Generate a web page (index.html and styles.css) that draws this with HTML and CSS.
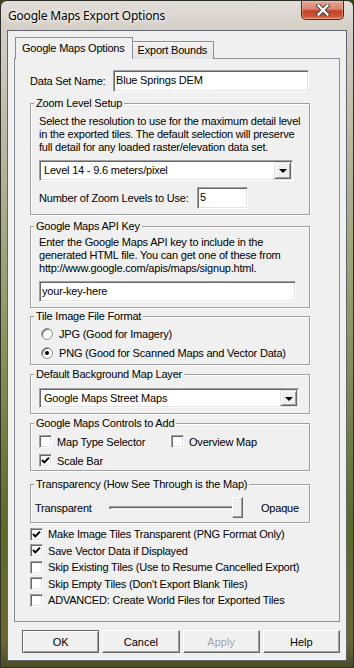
FILE: index.html
```html
<!DOCTYPE html>
<html>
<head>
  <title>Google Maps Export Options</title>
  <link rel="stylesheet" href="styles.css">
</head>
<body>
  <div class="window">
    <div class="titlebar">
      <span class="title">Google Maps Export Options</span>
      <button type="button" class="close" aria-label="Close">
        <svg width="14" height="12" viewBox="0 0 14 12">
          <path d="M2.5 1.5 L11.5 10.5 M11.5 1.5 L2.5 10.5" stroke="#3a3a3a" stroke-width="4.2" stroke-linecap="square"/>
          <path d="M2.5 1.5 L11.5 10.5 M11.5 1.5 L2.5 10.5" stroke="#fff" stroke-width="2.4" stroke-linecap="square"/>
        </svg>
      </button>
    </div>

    <div class="client">
      <div class="tabs">
        <div class="tab active">Google Maps Options</div>
        <div class="tab">Export Bounds</div>
      </div>

      <div class="page">
        <div class="name-row">
          <label for="dataSetName">Data Set Name:</label>
          <input type="text" id="dataSetName" class="field name-field" value="Blue Springs DEM">
        </div>

        <fieldset class="group zoom-group">
          <legend>Zoom Level Setup</legend>
          <p class="note">Select the resolution to use for the maximum detail level<br>in the exported tiles. The default selection will preserve<br>full detail for any loaded raster/elevation data set.</p>
          <div class="combo zoom-combo"><span class="combo-text">Level 14 - 9.6 meters/pixel</span><span class="drop"><i></i></span></div>
          <div class="levels-row">
            <label for="levels">Number of Zoom Levels to Use:</label>
            <input type="text" id="levels" class="field levels-field" value="5">
          </div>
        </fieldset>

        <fieldset class="group api-group">
          <legend>Google Maps API Key</legend>
          <p class="note">Enter the Google Maps API key to include in the<br>generated HTML file. You can get one of these from<br>http://www.google.com/apis/maps/signup.html.</p>
          <input type="text" class="field api-field" value="your-key-here">
        </fieldset>

        <fieldset class="group format-group">
          <legend>Tile Image File Format</legend>
          <label class="radio-row"><span class="radio"></span>JPG (Good for Imagery)</label>
          <label class="radio-row"><span class="radio on"></span>PNG (Good for Scanned Maps and Vector Data)</label>
        </fieldset>

        <fieldset class="group layer-group">
          <legend>Default Background Map Layer</legend>
          <div class="combo layer-combo"><span class="combo-text">Google Maps Street Maps</span><span class="drop"><i></i></span></div>
        </fieldset>

        <fieldset class="group controls-group">
          <legend>Google Maps Controls to Add</legend>
          <div class="controls-grid">
            <label class="check"><span class="box"></span>Map Type Selector</label>
            <label class="check"><span class="box"></span>Overview Map</label>
            <label class="check"><span class="box"><svg width="11" height="11" viewBox="0 0 11 11"><polyline points="2,5 4.3,7.4 9,2.6" fill="none" stroke="#000" stroke-width="2"/></svg></span>Scale Bar</label>
          </div>
        </fieldset>

        <fieldset class="group slider-group">
          <legend>Transparency (How See Through is the Map)</legend>
          <div class="slider-row">
            <span class="slider-label">Transparent</span>
            <div class="slider">
              <div class="track"></div>
              <div class="thumb"></div>
            </div>
            <span class="slider-end">Opaque</span>
          </div>
        </fieldset>

        <div class="options">
          <label class="check"><span class="box"><svg width="11" height="11" viewBox="0 0 11 11"><polyline points="2,5 4.3,7.4 9,2.6" fill="none" stroke="#000" stroke-width="2"/></svg></span>Make Image Tiles Transparent (PNG Format Only)</label>
          <label class="check"><span class="box"><svg width="11" height="11" viewBox="0 0 11 11"><polyline points="2,5 4.3,7.4 9,2.6" fill="none" stroke="#000" stroke-width="2"/></svg></span>Save Vector Data if Displayed</label>
          <label class="check"><span class="box"></span>Skip Existing Tiles (Use to Resume Cancelled Export)</label>
          <label class="check"><span class="box"></span>Skip Empty Tiles (Don't Export Blank Tiles)</label>
          <label class="check"><span class="box"></span>ADVANCED: Create World Files for Exported Tiles</label>
        </div>
      </div>

      <div class="buttons">
        <button type="button" class="btn default">OK</button>
        <button type="button" class="btn">Cancel</button>
        <button type="button" class="btn" disabled>Apply</button>
        <button type="button" class="btn">Help</button>
      </div>
    </div>
  </div>
</body>
</html>
```

FILE: styles.css
```css
* { box-sizing: border-box; }
body { margin: 0; background: #3c4420; font: 11px "Liberation Sans", Arial, sans-serif; letter-spacing: -0.2px; color: #000; }

/* window frame */
.window { width: 354px; height: 668px; display: flex; flex-direction: column; padding: 0 6px 6px; border: 1px solid #2f3128; border-radius: 7px 7px 3px 3px;
  background: linear-gradient(180deg, #e2ded8 0, #d4cec6 28px, #c0bba8 120px, #8e9660 330px, #5d6a2c 520px, #6c6630 640px, #4a4a24 668px); }
.titlebar { height: 29px; display: flex; align-items: flex-start; }
.title { font: 12px "Noto Sans", sans-serif; letter-spacing: -0.2px; margin: 6px 0 0 1px; text-shadow: 0 0 6px #fff, 0 0 3px #fff; }
.close { margin-left: auto; margin-right: 3px; width: 43px; height: 19px; padding: 0; display: flex; align-items: center; justify-content: center;
  border: 1px solid #5a2114; border-top: none; border-radius: 0 0 5px 5px;
  background: linear-gradient(180deg, #e9a898 0, #d9836b 45%, #c2432a 55%, #cc5637 85%, #e0866a 100%); box-shadow: inset 0 0 0 1px rgba(255,220,200,.35); }

.client { flex: 1; background: #f0f0f0; border: 1px solid #60666e; padding: 6px 6px 0; }

/* tabs */
.tabs { display: flex; align-items: flex-end; height: 22px; margin-left: 1px; position: relative; z-index: 1; margin-bottom: -1px; }
.tab { height: 18px; padding: 0 6px 0 5px; line-height: 17px; border: 1px solid #8b8e96; border-bottom: none; margin-left: -1px;
  background: linear-gradient(180deg, #f3f3f3, #e3e3e3); }
.tab.active { height: 22px; padding: 0 7px 0 6px; line-height: 20px; background: #f0f0f0; margin-left: 0; position: relative; z-index: 2; }
.page { height: 564px; border: 1px solid #8b8e96; padding: 11px 0 0 15px; background: #f0f0f0; }

/* 3d fields */
.field { font: 11px "Liberation Sans", Arial, sans-serif; letter-spacing: -0.2px; color: #000; background: #fff; padding: 0 2px; margin: 0; outline: none;
  border: 1px solid; border-color: #a0a0a0 #fff #fff #a0a0a0; box-shadow: inset 1px 1px #696969, inset -1px -1px #e3e3e3; }
.name-row { display: flex; align-items: center; height: 22px; }
.name-row label { width: 83px; }
.name-field { width: 196px; height: 22px; padding-bottom: 3px; }

.group { width: 280px; margin: 0; padding: 0 8px; border: 1px solid #a0a0a0; box-shadow: inset 1px 1px #fff, 1px 1px #fff; min-inline-size: 0; }
.group legend { padding: 0 2px; margin-left: -5px; line-height: 13px; background: #f0f0f0; }
.note { margin: 0; line-height: 13px; white-space: nowrap; }

.combo { display: flex; height: 21px; background: #fff; border: 1px solid; border-color: #a0a0a0 #fff #fff #a0a0a0; box-shadow: inset 1px 1px #696969, inset -1px -1px #e3e3e3; padding: 1px; }
.combo-text { flex: 1; padding: 2px 0 0 3px; }
.drop { width: 17px; display: flex; align-items: center; justify-content: center; background: #f0f0f0;
  border: 1px solid; border-color: #e3e3e3 #696969 #696969 #e3e3e3; box-shadow: inset 1px 1px #fff, inset -1px -1px #a0a0a0; }
.drop i { width: 0; height: 0; border-left: 4px solid transparent; border-right: 4px solid transparent; border-top: 4px solid #000; margin-top: 1px; }

.zoom-group { margin-top: 5px; padding-top: 5px; padding-bottom: 5px; }
.zoom-combo { width: 254px; margin-top: 6px; }
.levels-row { display: flex; align-items: center; margin-top: 6px; height: 22px; }
.levels-row label { width: 158px; }
.levels-field { width: 51px; height: 22px; padding-bottom: 3px; }

.api-group { margin-top: 5px; padding-top: 3px; padding-bottom: 5px; }
.api-field { display: block; width: 257px; height: 21px; margin-top: 6px; padding-bottom: 2px; }

.format-group { margin-top: 2px; padding-top: 1px; padding-bottom: 2px; }
.radio-row { display: flex; align-items: center; height: 19px; padding-left: 2px; }
.radio { width: 12px; height: 12px; border-radius: 50%; margin-right: 6px; background: #fff; border: 1px solid #8d8d8d; box-shadow: inset 1px 1px #6b6b6b, 0 0 0 1px #f8f8f8; display: flex; align-items: center; justify-content: center; }
.radio.on::after { content: ""; width: 4px; height: 4px; border-radius: 50%; background: #000; }

.layer-group { margin-top: 3px; padding-top: 7px; padding-bottom: 5px; }
.layer-combo { width: 260px; height: 20px; }

.controls-group { margin-top: 3px; padding-top: 3px; padding-bottom: 1px; }
.controls-grid { display: grid; grid-template-columns: 132px 1fr; row-gap: 2px; }

.check { display: flex; align-items: center; height: 17px; }
.box { width: 13px; height: 13px; flex: none; margin-right: 5px; background: #fff; border: 1px solid; border-color: #a0a0a0 #fff #fff #a0a0a0; box-shadow: inset 1px 1px #696969, inset -1px -1px #e3e3e3; display: flex; align-items: center; justify-content: center; }

.slider-group { margin-top: 7px; padding: 6px 8px 4px 4px; }
.slider-group legend { margin-left: -1px; }
.slider-row { display: flex; align-items: center; height: 21px; }
.slider-label { width: 74px; }
.slider { position: relative; width: 134px; height: 21px; display: flex; align-items: center; }
.track { width: 100%; height: 4px; border: 1px solid; border-color: #a0a0a0 #fff #fff #a0a0a0; box-shadow: inset 1px 1px #696969; background: #e3e3e3; }
.thumb { position: absolute; left: 123px; top: 0; width: 11px; height: 21px; background: #f0f0f0;
  border: 1px solid; border-color: #fff #696969 #696969 #fff; box-shadow: inset -1px -1px #a0a0a0; }
.slider-end { margin-left: 18px; }

.options { margin-top: 3px; }
.options .check { height: 16.5px; }

/* buttons */
.buttons { display: grid; grid-template-columns: repeat(4, 1fr); column-gap: 3px; padding: 8px 0 0 8px; }
.btn { height: 23px; font: 11px "Liberation Sans", Arial, sans-serif; color: #000; background: #f0f0f0; padding: 0;
  border: 1px solid; border-color: #fff #696969 #696969 #fff; box-shadow: inset -1px -1px #a0a0a0; }
.btn.default { border-color: #646464; box-shadow: inset 1px 1px #fff, inset -1px -1px #a0a0a0; }
.btn:disabled { color: #a0a0a0; text-shadow: 1px 1px #fff; }
```
